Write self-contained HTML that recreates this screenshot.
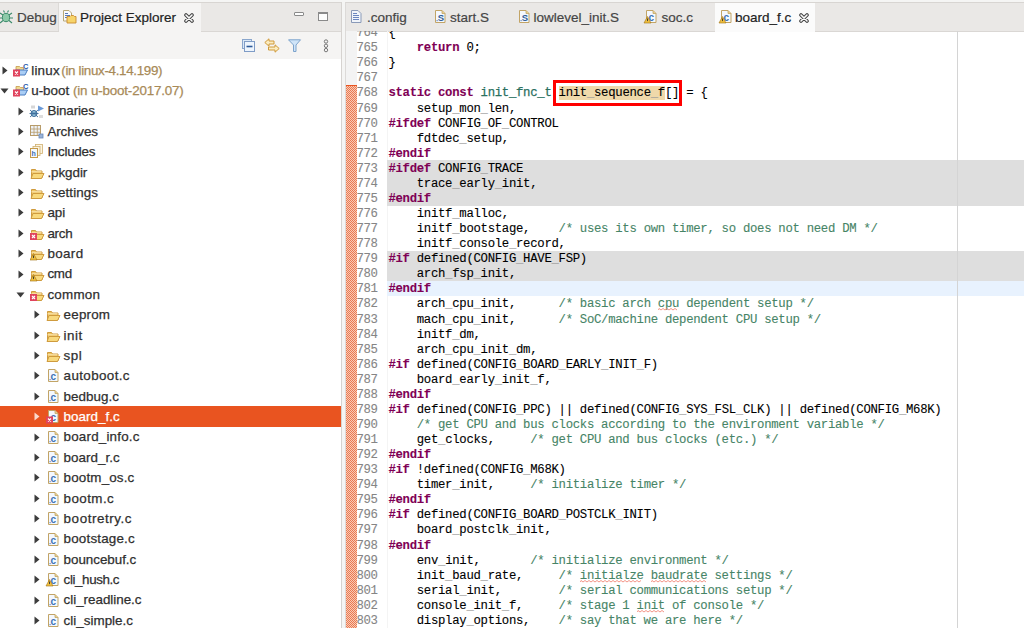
<!DOCTYPE html>
<html><head><meta charset="utf-8"><style>
html,body{margin:0;padding:0}
body{width:1024px;height:628px;overflow:hidden;position:relative;background:#f5f5f4;font-family:"Liberation Sans", sans-serif}
.abs{position:absolute}
.t{position:absolute;font-size:13.4px;line-height:16px;white-space:pre;-webkit-text-stroke:0.25px currentColor}
.tab{position:absolute;font-size:13.5px;line-height:16px;white-space:pre;color:#222;-webkit-text-stroke:0.2px currentColor}
.ln{position:absolute;left:0;width:31.7px;text-align:right;font-family:"Liberation Mono", monospace;font-size:12.3px;letter-spacing:-0.29px;line-height:15px;color:#858585;white-space:pre;-webkit-text-stroke:0.1px currentColor}
.cl{position:absolute;left:42.40px;font-family:"Liberation Mono", monospace;font-size:12.3px;letter-spacing:-0.29px;line-height:15px;color:#000;white-space:pre;-webkit-text-stroke:0.1px currentColor}
.k{color:#7f0055;font-weight:bold}
.t2{color:#005032}
.cl .t{position:static;font-size:inherit;line-height:inherit;color:#2a7060}
.c{color:#468466}
.u{color:#999}
.o{background:#efd9aa}
</style></head><body>
<!-- left panel -->
<div class="abs" style="left:0;top:2px;width:341px;height:626px;border-top:1px solid #d8d5d2;border-right:1px solid #d6d3d0;background:#fff;overflow:hidden">
  <div class="abs" style="left:0;top:0;width:341px;height:28px;background:#eae8e6;border-bottom:1px solid #dad7d4"></div>
  <div class="abs" style="left:58px;top:0;width:1px;height:28px;background:#dcdad7"></div>
  <div class="abs" style="left:59px;top:0;width:142px;height:30px;background:#f5f4f3"></div>
  <div class="abs" style="left:0;top:29px;width:341px;height:27px;background:#f5f4f3"></div>
</div>
<!-- left panel tab contents -->
<svg class="abs" style="left:-2px;top:9px" width="16" height="16" viewBox="0 0 16 16">
  <ellipse cx="8" cy="8.5" rx="3.6" ry="4.2" fill="#8ccaa8" stroke="#3a8a6a" stroke-width="1"/>
  <path d="M2 4 L5 6 M14 4 L11 6 M1 9 h3.5 M15 9 h-3.5 M2 14 L5 11.5 M14 14 L11 11.5 M6.5 3.5 L5.5 1.5 M9.5 3.5 L10.5 1.5" stroke="#3a8a6a" stroke-width="1.1"/>
</svg>
<div class="tab" style="left:17px;top:9.6px;color:#454545">Debug</div>
<svg class="abs" style="left:63px;top:10px" width="14" height="14" viewBox="0 0 14 14">
  <path d="M0.5 0.5 h5.5 l2.5 2.5 v8 h-8 z" fill="#fafbfd" stroke="#b8a878" stroke-width="1"/>
  <path d="M2 3.5 h3 M2 5.5 h5 M2 7.5 h5" stroke="#5a7ab8" stroke-width="1"/>
  <path d="M4 6.5 h3 l1 -1 h2.5 l1 1 h1.5 v6.5 h-9 z" fill="#f7d46a" stroke="#c88a30" stroke-width="0.9"/>
</svg>
<div class="tab" style="left:80px;top:9.6px">Project Explorer</div>
<svg class="abs" style="left:184px;top:12.5px" width="10" height="10" viewBox="0 0 10 10">
  <path d="M2 2 L8 8 M8 2 L2 8" stroke="#454545" stroke-width="3.6" stroke-linecap="round"/>
  <path d="M2 2 L8 8 M8 2 L2 8" stroke="#fbfbfb" stroke-width="1.6" stroke-linecap="round"/>
</svg>
<div class="abs" style="left:294px;top:12px;width:8px;height:2px;border:1px solid #8a8a8a;background:#fdfdfd;border-radius:1px"></div>
<div class="abs" style="left:318px;top:12px;width:8px;height:6px;border:1px solid #8a8a8a;border-top-width:2px;background:#fdfdfd"></div>
<!-- left toolbar -->
<svg class="abs" style="left:242px;top:39px" width="13" height="13" viewBox="0 0 13 13">
  <rect x="0.5" y="0.5" width="9" height="9" fill="#dbe8f6" stroke="#8aa6cc" stroke-width="1"/>
  <rect x="2.5" y="2.5" width="10" height="10" fill="#eef5fd" stroke="#7f9cc6" stroke-width="1"/>
  <path d="M4.5 7.5 h6" stroke="#2e5a9a" stroke-width="1.6"/>
</svg>
<svg class="abs" style="left:264px;top:38px" width="16" height="15" viewBox="0 0 16 15">
  <path d="M0.8 4.5 L5 0.8 L5 3 L10 3 L10 6 L5 6 L5 8.2 Z" fill="#fbecc0" stroke="#d09a3a" stroke-width="1"/>
  <path d="M15.2 10.5 L11 6.8 L11 9 L4.5 9 L4.5 12 L11 12 L11 14.2 Z" fill="#fbecc0" stroke="#d09a3a" stroke-width="1"/>
</svg>
<svg class="abs" style="left:288px;top:39px" width="14" height="14" viewBox="0 0 14 14">
  <path d="M0.5 0.8 L12.5 0.8 L8 6 L8 12.5 L5.5 12.5 L5.5 6 Z" fill="#cfe4f8" stroke="#7da3cc" stroke-width="1"/>
</svg>
<svg class="abs" style="left:323px;top:39px" width="6" height="14" viewBox="0 0 6 14">
  <circle cx="3" cy="2.5" r="1.7" fill="none" stroke="#777" stroke-width="1"/>
  <circle cx="3" cy="6.8" r="1.7" fill="none" stroke="#777" stroke-width="1"/>
  <circle cx="3" cy="11.1" r="1.7" fill="none" stroke="#777" stroke-width="1"/>
</svg>
<!-- tree -->
<svg style="position:absolute;left:2.0px;top:66px" width="6" height="9" viewBox="0 0 6 9" ><path d="M0.5 0.5 L5.5 4.5 L0.5 8.5 Z" fill="#3c3c3c"/></svg>
<svg style="position:absolute;left:12.5px;top:63px" width="16" height="14" viewBox="0 0 16 14" ><path d="M3 3.5 h3.5 l1 1 h3 v3 h-7.5 z" fill="#f0d890" stroke="#c49a4a" stroke-width="0.8"/><path d="M2.5 7 h12 l-2.5 5 h-9.5 z" fill="#a9cdf5" stroke="#4a7cc0" stroke-width="1"/><text x="10" y="6" font-family="Liberation Sans" font-weight="bold" font-size="7.5" fill="#2a5ca8">C</text><g transform="translate(0,6.5)"><rect x="0" y="0" width="7" height="7" fill="#e0445e"/><path d="M2 2 L5 5 M5 2 L2 5" stroke="#fff" stroke-width="1.1"/></g></svg>
<div class="t" style="left:31.2px;top:62.60px;color:#2f2f2f;letter-spacing:0.225px">linux</div><div class="t" style="left:61.3px;top:62.60px;color:#a88a58;letter-spacing:-0.33px">(in linux-4.14.199)</div>
<svg style="position:absolute;left:0.0px;top:88px" width="9" height="6" viewBox="0 0 9 6" ><path d="M0.5 0.5 L8.5 0.5 L4.5 5.5 Z" fill="#3c3c3c"/></svg>
<svg style="position:absolute;left:12.5px;top:83px" width="16" height="14" viewBox="0 0 16 14" ><path d="M3 3.5 h3.5 l1 1 h3 v3 h-7.5 z" fill="#f0d890" stroke="#c49a4a" stroke-width="0.8"/><path d="M2.5 7 h12 l-2.5 5 h-9.5 z" fill="#a9cdf5" stroke="#4a7cc0" stroke-width="1"/><text x="10" y="6" font-family="Liberation Sans" font-weight="bold" font-size="7.5" fill="#2a5ca8">C</text><g transform="translate(0,6.5)"><rect x="0" y="0" width="7" height="7" fill="#e0445e"/><path d="M2 2 L5 5 M5 2 L2 5" stroke="#fff" stroke-width="1.1"/></g></svg>
<div class="t" style="left:31.2px;top:82.98px;color:#2f2f2f;letter-spacing:0.000px">u-boot</div><div class="t" style="left:73.0px;top:82.98px;color:#a88a58;letter-spacing:-0.17px">(in u-boot-2017.07)</div>
<svg style="position:absolute;left:18.2px;top:107px" width="6" height="9" viewBox="0 0 6 9" ><path d="M0.5 0.5 L5.5 4.5 L0.5 8.5 Z" fill="#3c3c3c"/></svg>
<svg style="position:absolute;left:29.2px;top:105px" width="16" height="14" viewBox="0 0 16 14" ><path d="M9 0.5 L15 3.5 L9 6.5 Z" fill="#6a9ad8"/><circle cx="5" cy="8.5" r="3" fill="#9ac8e0" stroke="#3a6a98" stroke-width="1"/><path d="M1 5 L9 12 M9 5 L1 12 M0.5 8.5 h9" stroke="#3a6a98" stroke-width="0.9"/><path d="M3 0.5 v3 M5 0.5 v3" stroke="#999" stroke-width="0.8"/><path d="M11 10 v3 M13 10 v3" stroke="#aaa" stroke-width="0.8"/></svg>
<div class="t" style="left:47.4px;top:103.36px;color:#2f2f2f;letter-spacing:-0.129px">Binaries</div>
<svg style="position:absolute;left:18.2px;top:127px" width="6" height="9" viewBox="0 0 6 9" ><path d="M0.5 0.5 L5.5 4.5 L0.5 8.5 Z" fill="#3c3c3c"/></svg>
<svg style="position:absolute;left:29.2px;top:124px" width="15" height="15" viewBox="0 0 15 15" ><rect x="1.5" y="1.5" width="10" height="10" fill="#eef2f8" stroke="#b89c6a" stroke-width="1"/><path d="M5 1.5 v10 M8.3 1.5 v10 M1.5 5 h10 M1.5 8.3 h10" stroke="#b89c6a" stroke-width="0.8"/><rect x="10" y="10" width="4" height="4" fill="#9ab4d8" stroke="#6a88b8" stroke-width="0.8"/></svg>
<div class="t" style="left:47.4px;top:123.74px;color:#2f2f2f;letter-spacing:-0.114px">Archives</div>
<svg style="position:absolute;left:18.2px;top:147px" width="6" height="9" viewBox="0 0 6 9" ><path d="M0.5 0.5 L5.5 4.5 L0.5 8.5 Z" fill="#3c3c3c"/></svg>
<svg style="position:absolute;left:29.2px;top:144px" width="15" height="15" viewBox="0 0 15 15" ><rect x="6.5" y="0.5" width="7" height="9" fill="#fbf4e0" stroke="#d0b070" stroke-width="0.8"/><rect x="4" y="2.5" width="7" height="9" fill="#fbf4e0" stroke="#d0b070" stroke-width="0.8"/><rect x="1.5" y="4.5" width="7" height="9" fill="#f4f8fe" stroke="#c49a4a" stroke-width="1"/><text x="2.6" y="12.3" font-family="Liberation Sans" font-weight="bold" font-size="7" fill="#3a6fb4">h</text></svg>
<div class="t" style="left:47.4px;top:144.12px;color:#2f2f2f;letter-spacing:-0.272px">Includes</div>
<svg style="position:absolute;left:18.2px;top:168px" width="6" height="9" viewBox="0 0 6 9" ><path d="M0.5 0.5 L5.5 4.5 L0.5 8.5 Z" fill="#3c3c3c"/></svg>
<svg style="position:absolute;left:29.7px;top:167px" width="15" height="13" viewBox="0 0 15 13" ><path d="M1.5 2.5 h4 l1 1.5 h5.5 v7 h-10.5 z" fill="#eec462" stroke="#cf9b3e" stroke-width="1"/><path d="M1.5 4.8 h10" stroke="#fbe9b8" stroke-width="1"/><path d="M3 6.5 h11 l-2.5 5 h-10.5 z" fill="#f8d97e" stroke="#cf9b3e" stroke-width="1"/></svg>
<div class="t" style="left:47.4px;top:164.50px;color:#2f2f2f;letter-spacing:-0.050px">.pkgdir</div>
<svg style="position:absolute;left:18.2px;top:188px" width="6" height="9" viewBox="0 0 6 9" ><path d="M0.5 0.5 L5.5 4.5 L0.5 8.5 Z" fill="#3c3c3c"/></svg>
<svg style="position:absolute;left:29.7px;top:187px" width="15" height="13" viewBox="0 0 15 13" ><path d="M1.5 2.5 h4 l1 1.5 h5.5 v7 h-10.5 z" fill="#eec462" stroke="#cf9b3e" stroke-width="1"/><path d="M1.5 4.8 h10" stroke="#fbe9b8" stroke-width="1"/><path d="M3 6.5 h11 l-2.5 5 h-10.5 z" fill="#f8d97e" stroke="#cf9b3e" stroke-width="1"/></svg>
<div class="t" style="left:47.4px;top:184.88px;color:#2f2f2f;letter-spacing:0.100px">.settings</div>
<svg style="position:absolute;left:18.2px;top:208px" width="6" height="9" viewBox="0 0 6 9" ><path d="M0.5 0.5 L5.5 4.5 L0.5 8.5 Z" fill="#3c3c3c"/></svg>
<svg style="position:absolute;left:29.7px;top:207px" width="15" height="13" viewBox="0 0 15 13" ><path d="M1.5 2.5 h4 l1 1.5 h5.5 v7 h-10.5 z" fill="#eec462" stroke="#cf9b3e" stroke-width="1"/><path d="M1.5 4.8 h10" stroke="#fbe9b8" stroke-width="1"/><path d="M3 6.5 h11 l-2.5 5 h-10.5 z" fill="#f8d97e" stroke="#cf9b3e" stroke-width="1"/></svg>
<div class="t" style="left:47.4px;top:205.26px;color:#2f2f2f;letter-spacing:0.000px">api</div>
<svg style="position:absolute;left:18.2px;top:229px" width="6" height="9" viewBox="0 0 6 9" ><path d="M0.5 0.5 L5.5 4.5 L0.5 8.5 Z" fill="#3c3c3c"/></svg>
<svg style="position:absolute;left:29.7px;top:228px" width="15" height="13" viewBox="0 0 15 13" ><path d="M1.5 2.5 h4 l1 1.5 h5.5 v7 h-10.5 z" fill="#eec462" stroke="#cf9b3e" stroke-width="1"/><path d="M1.5 4.8 h10" stroke="#fbe9b8" stroke-width="1"/><path d="M3 6.5 h11 l-2.5 5 h-10.5 z" fill="#f8d97e" stroke="#cf9b3e" stroke-width="1"/><g transform="translate(0,5)"><rect x="0" y="0" width="7" height="7" fill="#e0445e"/><path d="M2 2 L5 5 M5 2 L2 5" stroke="#fff" stroke-width="1.1"/></g></svg>
<div class="t" style="left:47.4px;top:225.64px;color:#2f2f2f;letter-spacing:-0.267px">arch</div>
<svg style="position:absolute;left:18.2px;top:249px" width="6" height="9" viewBox="0 0 6 9" ><path d="M0.5 0.5 L5.5 4.5 L0.5 8.5 Z" fill="#3c3c3c"/></svg>
<svg style="position:absolute;left:29.7px;top:248px" width="15" height="13" viewBox="0 0 15 13" ><path d="M1.5 2.5 h4 l1 1.5 h5.5 v7 h-10.5 z" fill="#eec462" stroke="#cf9b3e" stroke-width="1"/><path d="M1.5 4.8 h10" stroke="#fbe9b8" stroke-width="1"/><path d="M3 6.5 h11 l-2.5 5 h-10.5 z" fill="#f8d97e" stroke="#cf9b3e" stroke-width="1"/><g transform="translate(0,5.5)"><path d="M3.5 0 L7 6.5 L0 6.5 Z" fill="#f0c040" stroke="#a07010" stroke-width="0.6"/><rect x="3.1" y="2" width="0.9" height="2.6" fill="#333"/></g></svg>
<div class="t" style="left:47.4px;top:246.02px;color:#2f2f2f;letter-spacing:0.375px">board</div>
<svg style="position:absolute;left:18.2px;top:270px" width="6" height="9" viewBox="0 0 6 9" ><path d="M0.5 0.5 L5.5 4.5 L0.5 8.5 Z" fill="#3c3c3c"/></svg>
<svg style="position:absolute;left:29.7px;top:269px" width="15" height="13" viewBox="0 0 15 13" ><path d="M1.5 2.5 h4 l1 1.5 h5.5 v7 h-10.5 z" fill="#eec462" stroke="#cf9b3e" stroke-width="1"/><path d="M1.5 4.8 h10" stroke="#fbe9b8" stroke-width="1"/><path d="M3 6.5 h11 l-2.5 5 h-10.5 z" fill="#f8d97e" stroke="#cf9b3e" stroke-width="1"/><g transform="translate(0,5.5)"><path d="M3.5 0 L7 6.5 L0 6.5 Z" fill="#f0c040" stroke="#a07010" stroke-width="0.6"/><rect x="3.1" y="2" width="0.9" height="2.6" fill="#333"/></g></svg>
<div class="t" style="left:47.4px;top:266.40px;color:#2f2f2f;letter-spacing:-0.251px">cmd</div>
<svg style="position:absolute;left:16.2px;top:292px" width="9" height="6" viewBox="0 0 9 6" ><path d="M0.5 0.5 L8.5 0.5 L4.5 5.5 Z" fill="#3c3c3c"/></svg>
<svg style="position:absolute;left:29.7px;top:289px" width="15" height="13" viewBox="0 0 15 13" ><path d="M1.5 2.5 h4 l1 1.5 h5.5 v7 h-10.5 z" fill="#eec462" stroke="#cf9b3e" stroke-width="1"/><path d="M1.5 4.8 h10" stroke="#fbe9b8" stroke-width="1"/><path d="M3 6.5 h11 l-2.5 5 h-10.5 z" fill="#f8d97e" stroke="#cf9b3e" stroke-width="1"/><g transform="translate(0,5)"><rect x="0" y="0" width="7" height="7" fill="#e0445e"/><path d="M2 2 L5 5 M5 2 L2 5" stroke="#fff" stroke-width="1.1"/></g></svg>
<div class="t" style="left:47.4px;top:286.78px;color:#2f2f2f;letter-spacing:0.240px">common</div>
<svg style="position:absolute;left:34.4px;top:310px" width="6" height="9" viewBox="0 0 6 9" ><path d="M0.5 0.5 L5.5 4.5 L0.5 8.5 Z" fill="#3c3c3c"/></svg>
<svg style="position:absolute;left:45.9px;top:309px" width="15" height="13" viewBox="0 0 15 13" ><path d="M1.5 2.5 h4 l1 1.5 h5.5 v7 h-10.5 z" fill="#eec462" stroke="#cf9b3e" stroke-width="1"/><path d="M1.5 4.8 h10" stroke="#fbe9b8" stroke-width="1"/><path d="M3 6.5 h11 l-2.5 5 h-10.5 z" fill="#f8d97e" stroke="#cf9b3e" stroke-width="1"/></svg>
<div class="t" style="left:63.6px;top:307.16px;color:#2f2f2f;letter-spacing:0.200px">eeprom</div>
<svg style="position:absolute;left:34.4px;top:331px" width="6" height="9" viewBox="0 0 6 9" ><path d="M0.5 0.5 L5.5 4.5 L0.5 8.5 Z" fill="#3c3c3c"/></svg>
<svg style="position:absolute;left:45.9px;top:330px" width="15" height="13" viewBox="0 0 15 13" ><path d="M1.5 2.5 h4 l1 1.5 h5.5 v7 h-10.5 z" fill="#eec462" stroke="#cf9b3e" stroke-width="1"/><path d="M1.5 4.8 h10" stroke="#fbe9b8" stroke-width="1"/><path d="M3 6.5 h11 l-2.5 5 h-10.5 z" fill="#f8d97e" stroke="#cf9b3e" stroke-width="1"/></svg>
<div class="t" style="left:63.6px;top:327.54px;color:#2f2f2f;letter-spacing:0.467px">init</div>
<svg style="position:absolute;left:34.4px;top:351px" width="6" height="9" viewBox="0 0 6 9" ><path d="M0.5 0.5 L5.5 4.5 L0.5 8.5 Z" fill="#3c3c3c"/></svg>
<svg style="position:absolute;left:45.9px;top:350px" width="15" height="13" viewBox="0 0 15 13" ><path d="M1.5 2.5 h4 l1 1.5 h5.5 v7 h-10.5 z" fill="#eec462" stroke="#cf9b3e" stroke-width="1"/><path d="M1.5 4.8 h10" stroke="#fbe9b8" stroke-width="1"/><path d="M3 6.5 h11 l-2.5 5 h-10.5 z" fill="#f8d97e" stroke="#cf9b3e" stroke-width="1"/></svg>
<div class="t" style="left:63.6px;top:347.92px;color:#2f2f2f;letter-spacing:0.450px">spl</div>
<svg style="position:absolute;left:34.4px;top:371px" width="6" height="9" viewBox="0 0 6 9" ><path d="M0.5 0.5 L5.5 4.5 L0.5 8.5 Z" fill="#3c3c3c"/></svg>
<svg style="position:absolute;left:47.9px;top:368.5px" width="11" height="14" viewBox="0 0 11 14" overflow="visible"><path d="M0.5 0.5 h6.5 l3 3 v9 h-9.5 z" fill="#f4f8fe" stroke="#c2a466" stroke-width="1"/><path d="M7 0.5 v3 h3" fill="#e8cf8c" stroke="#c2a466" stroke-width="0.8"/><text x="2.6" y="11" font-family="Liberation Sans" font-weight="bold" font-size="10" fill="#3f73b6">c</text><rect x="1.5" y="10" width="1.2" height="1.2" fill="#6a8fc0"/></svg>
<div class="t" style="left:63.6px;top:368.30px;color:#2f2f2f;letter-spacing:0.378px">autoboot.c</div>
<svg style="position:absolute;left:34.4px;top:392px" width="6" height="9" viewBox="0 0 6 9" ><path d="M0.5 0.5 L5.5 4.5 L0.5 8.5 Z" fill="#3c3c3c"/></svg>
<svg style="position:absolute;left:47.9px;top:389.5px" width="11" height="14" viewBox="0 0 11 14" overflow="visible"><path d="M0.5 0.5 h6.5 l3 3 v9 h-9.5 z" fill="#f4f8fe" stroke="#c2a466" stroke-width="1"/><path d="M7 0.5 v3 h3" fill="#e8cf8c" stroke="#c2a466" stroke-width="0.8"/><text x="2.6" y="11" font-family="Liberation Sans" font-weight="bold" font-size="10" fill="#3f73b6">c</text><rect x="1.5" y="10" width="1.2" height="1.2" fill="#6a8fc0"/></svg>
<div class="t" style="left:63.6px;top:388.68px;color:#2f2f2f;letter-spacing:0.029px">bedbug.c</div>
<div style="position:absolute;left:0;top:405.86px;width:341px;height:21px;background:#e95420"></div>
<svg style="position:absolute;left:34.4px;top:412px" width="6" height="9" viewBox="0 0 6 9" ><path d="M0.5 0.5 L5.5 4.5 L0.5 8.5 Z" fill="#fbd9cc"/></svg>
<svg style="position:absolute;left:47.9px;top:409.5px" width="11" height="14" viewBox="0 0 11 14" overflow="visible"><path d="M0.5 0.5 h6.5 l3 3 v9 h-9.5 z" fill="#f4f8fe" stroke="#c2a466" stroke-width="1"/><path d="M7 0.5 v3 h3" fill="#e8cf8c" stroke="#c2a466" stroke-width="0.8"/><text x="2.6" y="11" font-family="Liberation Sans" font-weight="bold" font-size="10" fill="#3f73b6">c</text><rect x="1.5" y="10" width="1.2" height="1.2" fill="#6a8fc0"/><g transform="translate(-2,6.5)"><rect x="0" y="0" width="7" height="7" fill="#e0445e"/><path d="M2 2 L5 5 M5 2 L2 5" stroke="#fff" stroke-width="1.1"/></g></svg>
<div class="t" style="left:63.6px;top:409.06px;color:#ffffff;letter-spacing:0.025px">board_f.c</div>
<svg style="position:absolute;left:34.4px;top:433px" width="6" height="9" viewBox="0 0 6 9" ><path d="M0.5 0.5 L5.5 4.5 L0.5 8.5 Z" fill="#3c3c3c"/></svg>
<svg style="position:absolute;left:47.9px;top:430.5px" width="11" height="14" viewBox="0 0 11 14" overflow="visible"><path d="M0.5 0.5 h6.5 l3 3 v9 h-9.5 z" fill="#f4f8fe" stroke="#c2a466" stroke-width="1"/><path d="M7 0.5 v3 h3" fill="#e8cf8c" stroke="#c2a466" stroke-width="0.8"/><text x="2.6" y="11" font-family="Liberation Sans" font-weight="bold" font-size="10" fill="#3f73b6">c</text><rect x="1.5" y="10" width="1.2" height="1.2" fill="#6a8fc0"/></svg>
<div class="t" style="left:63.6px;top:429.44px;color:#2f2f2f;letter-spacing:0.191px">board_info.c</div>
<svg style="position:absolute;left:34.4px;top:453px" width="6" height="9" viewBox="0 0 6 9" ><path d="M0.5 0.5 L5.5 4.5 L0.5 8.5 Z" fill="#3c3c3c"/></svg>
<svg style="position:absolute;left:47.9px;top:450.5px" width="11" height="14" viewBox="0 0 11 14" overflow="visible"><path d="M0.5 0.5 h6.5 l3 3 v9 h-9.5 z" fill="#f4f8fe" stroke="#c2a466" stroke-width="1"/><path d="M7 0.5 v3 h3" fill="#e8cf8c" stroke="#c2a466" stroke-width="0.8"/><text x="2.6" y="11" font-family="Liberation Sans" font-weight="bold" font-size="10" fill="#3f73b6">c</text><rect x="1.5" y="10" width="1.2" height="1.2" fill="#6a8fc0"/></svg>
<div class="t" style="left:63.6px;top:449.82px;color:#2f2f2f;letter-spacing:0.025px">board_r.c</div>
<svg style="position:absolute;left:34.4px;top:473px" width="6" height="9" viewBox="0 0 6 9" ><path d="M0.5 0.5 L5.5 4.5 L0.5 8.5 Z" fill="#3c3c3c"/></svg>
<svg style="position:absolute;left:47.9px;top:470.5px" width="11" height="14" viewBox="0 0 11 14" overflow="visible"><path d="M0.5 0.5 h6.5 l3 3 v9 h-9.5 z" fill="#f4f8fe" stroke="#c2a466" stroke-width="1"/><path d="M7 0.5 v3 h3" fill="#e8cf8c" stroke="#c2a466" stroke-width="0.8"/><text x="2.6" y="11" font-family="Liberation Sans" font-weight="bold" font-size="10" fill="#3f73b6">c</text><rect x="1.5" y="10" width="1.2" height="1.2" fill="#6a8fc0"/></svg>
<div class="t" style="left:63.6px;top:470.20px;color:#2f2f2f;letter-spacing:0.167px">bootm_os.c</div>
<svg style="position:absolute;left:34.4px;top:494px" width="6" height="9" viewBox="0 0 6 9" ><path d="M0.5 0.5 L5.5 4.5 L0.5 8.5 Z" fill="#3c3c3c"/></svg>
<svg style="position:absolute;left:47.9px;top:491.5px" width="11" height="14" viewBox="0 0 11 14" overflow="visible"><path d="M0.5 0.5 h6.5 l3 3 v9 h-9.5 z" fill="#f4f8fe" stroke="#c2a466" stroke-width="1"/><path d="M7 0.5 v3 h3" fill="#e8cf8c" stroke="#c2a466" stroke-width="0.8"/><text x="2.6" y="11" font-family="Liberation Sans" font-weight="bold" font-size="10" fill="#3f73b6">c</text><rect x="1.5" y="10" width="1.2" height="1.2" fill="#6a8fc0"/></svg>
<div class="t" style="left:63.6px;top:490.58px;color:#2f2f2f;letter-spacing:0.416px">bootm.c</div>
<svg style="position:absolute;left:34.4px;top:514px" width="6" height="9" viewBox="0 0 6 9" ><path d="M0.5 0.5 L5.5 4.5 L0.5 8.5 Z" fill="#3c3c3c"/></svg>
<svg style="position:absolute;left:47.9px;top:511.5px" width="11" height="14" viewBox="0 0 11 14" overflow="visible"><path d="M0.5 0.5 h6.5 l3 3 v9 h-9.5 z" fill="#f4f8fe" stroke="#c2a466" stroke-width="1"/><path d="M7 0.5 v3 h3" fill="#e8cf8c" stroke="#c2a466" stroke-width="0.8"/><text x="2.6" y="11" font-family="Liberation Sans" font-weight="bold" font-size="10" fill="#3f73b6">c</text><rect x="1.5" y="10" width="1.2" height="1.2" fill="#6a8fc0"/></svg>
<div class="t" style="left:63.6px;top:510.96px;color:#2f2f2f;letter-spacing:0.570px">bootretry.c</div>
<svg style="position:absolute;left:34.4px;top:535px" width="6" height="9" viewBox="0 0 6 9" ><path d="M0.5 0.5 L5.5 4.5 L0.5 8.5 Z" fill="#3c3c3c"/></svg>
<svg style="position:absolute;left:47.9px;top:532.5px" width="11" height="14" viewBox="0 0 11 14" overflow="visible"><path d="M0.5 0.5 h6.5 l3 3 v9 h-9.5 z" fill="#f4f8fe" stroke="#c2a466" stroke-width="1"/><path d="M7 0.5 v3 h3" fill="#e8cf8c" stroke="#c2a466" stroke-width="0.8"/><text x="2.6" y="11" font-family="Liberation Sans" font-weight="bold" font-size="10" fill="#3f73b6">c</text><rect x="1.5" y="10" width="1.2" height="1.2" fill="#6a8fc0"/></svg>
<div class="t" style="left:63.6px;top:531.34px;color:#2f2f2f;letter-spacing:0.190px">bootstage.c</div>
<svg style="position:absolute;left:34.4px;top:555px" width="6" height="9" viewBox="0 0 6 9" ><path d="M0.5 0.5 L5.5 4.5 L0.5 8.5 Z" fill="#3c3c3c"/></svg>
<svg style="position:absolute;left:47.9px;top:552.5px" width="11" height="14" viewBox="0 0 11 14" overflow="visible"><path d="M0.5 0.5 h6.5 l3 3 v9 h-9.5 z" fill="#f4f8fe" stroke="#c2a466" stroke-width="1"/><path d="M7 0.5 v3 h3" fill="#e8cf8c" stroke="#c2a466" stroke-width="0.8"/><text x="2.6" y="11" font-family="Liberation Sans" font-weight="bold" font-size="10" fill="#3f73b6">c</text><rect x="1.5" y="10" width="1.2" height="1.2" fill="#6a8fc0"/></svg>
<div class="t" style="left:63.6px;top:551.72px;color:#2f2f2f;letter-spacing:-0.030px">bouncebuf.c</div>
<svg style="position:absolute;left:34.4px;top:575px" width="6" height="9" viewBox="0 0 6 9" ><path d="M0.5 0.5 L5.5 4.5 L0.5 8.5 Z" fill="#3c3c3c"/></svg>
<svg style="position:absolute;left:47.9px;top:572.5px" width="11" height="14" viewBox="0 0 11 14" overflow="visible"><path d="M0.5 0.5 h6.5 l3 3 v9 h-9.5 z" fill="#f4f8fe" stroke="#c2a466" stroke-width="1"/><path d="M7 0.5 v3 h3" fill="#e8cf8c" stroke="#c2a466" stroke-width="0.8"/><text x="2.6" y="11" font-family="Liberation Sans" font-weight="bold" font-size="10" fill="#3f73b6">c</text><rect x="1.5" y="10" width="1.2" height="1.2" fill="#6a8fc0"/><g transform="translate(-2,6.5)"><path d="M3.5 0 L7 6.5 L0 6.5 Z" fill="#f0c040" stroke="#a07010" stroke-width="0.6"/><rect x="3.1" y="2" width="0.9" height="2.6" fill="#333"/></g></svg>
<div class="t" style="left:63.6px;top:572.10px;color:#2f2f2f;letter-spacing:-0.400px">cli_hush.c</div>
<svg style="position:absolute;left:34.4px;top:596px" width="6" height="9" viewBox="0 0 6 9" ><path d="M0.5 0.5 L5.5 4.5 L0.5 8.5 Z" fill="#3c3c3c"/></svg>
<svg style="position:absolute;left:47.9px;top:593.5px" width="11" height="14" viewBox="0 0 11 14" overflow="visible"><path d="M0.5 0.5 h6.5 l3 3 v9 h-9.5 z" fill="#f4f8fe" stroke="#c2a466" stroke-width="1"/><path d="M7 0.5 v3 h3" fill="#e8cf8c" stroke="#c2a466" stroke-width="0.8"/><text x="2.6" y="11" font-family="Liberation Sans" font-weight="bold" font-size="10" fill="#3f73b6">c</text><rect x="1.5" y="10" width="1.2" height="1.2" fill="#6a8fc0"/></svg>
<div class="t" style="left:63.6px;top:592.48px;color:#2f2f2f;letter-spacing:-0.023px">cli_readline.c</div>
<svg style="position:absolute;left:34.4px;top:616px" width="6" height="9" viewBox="0 0 6 9" ><path d="M0.5 0.5 L5.5 4.5 L0.5 8.5 Z" fill="#3c3c3c"/></svg>
<svg style="position:absolute;left:47.9px;top:613.5px" width="11" height="14" viewBox="0 0 11 14" overflow="visible"><path d="M0.5 0.5 h6.5 l3 3 v9 h-9.5 z" fill="#f4f8fe" stroke="#c2a466" stroke-width="1"/><path d="M7 0.5 v3 h3" fill="#e8cf8c" stroke="#c2a466" stroke-width="0.8"/><text x="2.6" y="11" font-family="Liberation Sans" font-weight="bold" font-size="10" fill="#3f73b6">c</text><rect x="1.5" y="10" width="1.2" height="1.2" fill="#6a8fc0"/></svg>
<div class="t" style="left:63.6px;top:612.86px;color:#2f2f2f;letter-spacing:0.019px">cli_simple.c</div>
<!-- editor panel -->
<div class="abs" style="left:345px;top:2px;width:679px;height:626px;border-top:1px solid #d8d5d2;border-left:1px solid #dcdad8;background:#fff;overflow:hidden">
  <div class="abs" style="left:0;top:0;width:679px;height:28px;background:#eae8e6;border-bottom:1px solid #dad7d4"></div>
  <div class="abs" style="left:369px;top:0;width:100px;height:29px;background:#fbfbfb"></div>
</div>
<!-- editor tabs -->

<svg style="position:absolute;left:351px;top:10px" width="11" height="14" viewBox="0 0 11 14" ><path d="M0.5 0.5 h6.5 l3 3 v9 h-9.5 z" fill="#f0f4fa" stroke="#8a9ab8" stroke-width="1"/><path d="M2 3.5 h4 M2 5.5 h6 M2 7.5 h6 M2 9.5 h6" stroke="#6a86c0" stroke-width="1"/></svg>
<div class="tab" style="left:367px;top:9.6px;color:#454545">.config</div>
<svg style="position:absolute;left:435px;top:10px" width="11" height="14" viewBox="0 0 11 14" ><path d="M0.5 0.5 h6.5 l3 3 v9 h-9.5 z" fill="#f4f8fe" stroke="#c2a466" stroke-width="1"/><path d="M7 0.5 v3 h3" fill="#e8cf8c" stroke="#c2a466" stroke-width="0.8"/><text x="2.8" y="11" font-family="Liberation Sans" font-weight="bold" font-size="9.5" fill="#2f5c98">S</text><rect x="1.5" y="10" width="1.2" height="1.2" fill="#6a8fc0"/></svg>
<div class="tab" style="left:450px;top:9.6px;color:#454545">start.S</div>
<svg style="position:absolute;left:519px;top:10px" width="11" height="14" viewBox="0 0 11 14" ><path d="M0.5 0.5 h6.5 l3 3 v9 h-9.5 z" fill="#f4f8fe" stroke="#c2a466" stroke-width="1"/><path d="M7 0.5 v3 h3" fill="#e8cf8c" stroke="#c2a466" stroke-width="0.8"/><text x="2.8" y="11" font-family="Liberation Sans" font-weight="bold" font-size="9.5" fill="#2f5c98">S</text><rect x="1.5" y="10" width="1.2" height="1.2" fill="#6a8fc0"/></svg>
<div class="tab" style="left:533.5px;top:9.6px;color:#454545">lowlevel_init.S</div>
<svg style="position:absolute;left:646px;top:10px" width="11" height="14" viewBox="0 0 11 14" overflow="visible"><path d="M0.5 0.5 h6.5 l3 3 v9 h-9.5 z" fill="#f4f8fe" stroke="#c2a466" stroke-width="1"/><path d="M7 0.5 v3 h3" fill="#e8cf8c" stroke="#c2a466" stroke-width="0.8"/><text x="2.6" y="11" font-family="Liberation Sans" font-weight="bold" font-size="10" fill="#3f73b6">c</text><rect x="1.5" y="10" width="1.2" height="1.2" fill="#6a8fc0"/><g transform="translate(-2,6.5)"><path d="M3.5 0 L7 6.5 L0 6.5 Z" fill="#f0c040" stroke="#a07010" stroke-width="0.6"/><rect x="3.1" y="2" width="0.9" height="2.6" fill="#333"/></g></svg>
<div class="tab" style="left:661.5px;top:9.6px;color:#454545">soc.c</div>
<svg style="position:absolute;left:721px;top:10px" width="11" height="14" viewBox="0 0 11 14" overflow="visible"><path d="M0.5 0.5 h6.5 l3 3 v9 h-9.5 z" fill="#f4f8fe" stroke="#c2a466" stroke-width="1"/><path d="M7 0.5 v3 h3" fill="#e8cf8c" stroke="#c2a466" stroke-width="0.8"/><text x="2.6" y="11" font-family="Liberation Sans" font-weight="bold" font-size="10" fill="#3f73b6">c</text><rect x="1.5" y="10" width="1.2" height="1.2" fill="#6a8fc0"/><g transform="translate(-2,6.5)"><path d="M3.5 0 L7 6.5 L0 6.5 Z" fill="#f0c040" stroke="#a07010" stroke-width="0.6"/><rect x="3.1" y="2" width="0.9" height="2.6" fill="#333"/></g></svg>
<div class="tab" style="left:735px;top:9.6px">board_f.c</div>
<svg class="abs" style="left:798.5px;top:12.5px" width="10" height="10" viewBox="0 0 10 10">
  <path d="M2 2 L8 8 M8 2 L2 8" stroke="#454545" stroke-width="3.6" stroke-linecap="round"/>
  <path d="M2 2 L8 8 M8 2 L2 8" stroke="#fbfbfb" stroke-width="1.6" stroke-linecap="round"/>
</svg>

<div class="abs" style="left:346px;top:31px;width:678px;height:597px;overflow:hidden">
  <div class="abs" style="left:0;top:0;width:11px;height:597px;background:#f3f3f3"></div>
  <div class="abs" style="left:0;top:53.95px;width:11px;height:600px;background:repeating-conic-gradient(#ec7850 0% 25%, #f7cbb6 0% 50%) 0 0/2px 2px"></div>
  <div class="abs" style="left:0;top:53.95px;width:11px;height:1px;background:#e95420"></div>
  <div class="abs" style="left:40.5px;top:0;width:1px;height:597px;background:#f4f4f4"></div>
<div style="position:absolute;left:41px;top:129.30px;width:640px;height:15.12px;background:#dedede"></div>
<div style="position:absolute;left:41px;top:144.37px;width:640px;height:15.12px;background:#dedede"></div>
<div style="position:absolute;left:41px;top:159.44px;width:640px;height:15.12px;background:#dedede"></div>
<div style="position:absolute;left:41px;top:219.72px;width:640px;height:15.12px;background:#dedede"></div>
<div style="position:absolute;left:41px;top:234.79px;width:640px;height:15.12px;background:#dedede"></div>
<div style="position:absolute;left:41px;top:249.86px;width:640px;height:15.07px;background:#e8f2fe"></div>
<div class="ln" style="top:-4.83px">764</div>
<div class="cl" style="top:-4.83px">{</div>
<div class="ln" style="top:10.24px">765</div>
<div class="cl" style="top:10.24px">    <span class="k">return</span> 0;</div>
<div class="ln" style="top:25.31px">766</div>
<div class="cl" style="top:25.31px">}</div>
<div class="ln" style="top:40.38px">767</div>
<div class="ln" style="top:55.45px">768</div>
<div class="cl" style="top:55.45px"><span class="k">static</span> <span class="k">const</span> <span class="t">init_fnc_t</span> <span class="o">init<span class="u">_</span>sequence<span class="u">_</span>f</span>[] = {</div>
<div class="ln" style="top:70.52px">769</div>
<div class="cl" style="top:70.52px">    setup<span class="u">_</span>mon<span class="u">_</span>len,</div>
<div class="ln" style="top:85.59px">770</div>
<div class="cl" style="top:85.59px"><span class="k">#ifdef</span> CONFIG<span class="u">_</span>OF<span class="u">_</span>CONTROL</div>
<div class="ln" style="top:100.66px">771</div>
<div class="cl" style="top:100.66px">    fdtdec<span class="u">_</span>setup,</div>
<div class="ln" style="top:115.73px">772</div>
<div class="cl" style="top:115.73px"><span class="k">#endif</span></div>
<div class="ln" style="top:130.80px">773</div>
<div class="cl" style="top:130.80px"><span class="k">#ifdef</span> CONFIG<span class="u">_</span>TRACE</div>
<div class="ln" style="top:145.87px">774</div>
<div class="cl" style="top:145.87px">    trace<span class="u">_</span>early<span class="u">_</span>init,</div>
<div class="ln" style="top:160.94px">775</div>
<div class="cl" style="top:160.94px"><span class="k">#endif</span></div>
<div class="ln" style="top:176.01px">776</div>
<div class="cl" style="top:176.01px">    initf<span class="u">_</span>malloc,</div>
<div class="ln" style="top:191.08px">777</div>
<div class="cl" style="top:191.08px">    initf<span class="u">_</span>bootstage,    <span class="c">/* uses its own timer, so does not need DM */</span></div>
<div class="ln" style="top:206.15px">778</div>
<div class="cl" style="top:206.15px">    initf<span class="u">_</span>console<span class="u">_</span>record,</div>
<div class="ln" style="top:221.22px">779</div>
<div class="cl" style="top:221.22px"><span class="k">#if</span> defined(CONFIG<span class="u">_</span>HAVE<span class="u">_</span>FSP)</div>
<div class="ln" style="top:236.29px">780</div>
<div class="cl" style="top:236.29px">    arch<span class="u">_</span>fsp<span class="u">_</span>init,</div>
<div class="ln" style="top:251.36px">781</div>
<div class="cl" style="top:251.36px"><span class="k">#endif</span></div>
<div class="ln" style="top:266.43px">782</div>
<div class="cl" style="top:266.43px">    arch<span class="u">_</span>cpu<span class="u">_</span>init,      <span class="c">/* basic arch cpu dependent setup */</span></div>
<div class="ln" style="top:281.50px">783</div>
<div class="cl" style="top:281.50px">    mach<span class="u">_</span>cpu<span class="u">_</span>init,      <span class="c">/* SoC/machine dependent CPU setup */</span></div>
<div class="ln" style="top:296.57px">784</div>
<div class="cl" style="top:296.57px">    initf<span class="u">_</span>dm,</div>
<div class="ln" style="top:311.64px">785</div>
<div class="cl" style="top:311.64px">    arch<span class="u">_</span>cpu<span class="u">_</span>init<span class="u">_</span>dm,</div>
<div class="ln" style="top:326.71px">786</div>
<div class="cl" style="top:326.71px"><span class="k">#if</span> defined(CONFIG<span class="u">_</span>BOARD<span class="u">_</span>EARLY<span class="u">_</span>INIT<span class="u">_</span>F)</div>
<div class="ln" style="top:341.78px">787</div>
<div class="cl" style="top:341.78px">    board<span class="u">_</span>early<span class="u">_</span>init<span class="u">_</span>f,</div>
<div class="ln" style="top:356.85px">788</div>
<div class="cl" style="top:356.85px"><span class="k">#endif</span></div>
<div class="ln" style="top:371.92px">789</div>
<div class="cl" style="top:371.92px"><span class="k">#if</span> defined(CONFIG<span class="u">_</span>PPC) || defined(CONFIG<span class="u">_</span>SYS<span class="u">_</span>FSL<span class="u">_</span>CLK) || defined(CONFIG<span class="u">_</span>M68K)</div>
<div class="ln" style="top:386.99px">790</div>
<div class="cl" style="top:386.99px">    <span class="c">/* get CPU and bus clocks according to the environment variable */</span></div>
<div class="ln" style="top:402.06px">791</div>
<div class="cl" style="top:402.06px">    get<span class="u">_</span>clocks,     <span class="c">/* get CPU and bus clocks (etc.) */</span></div>
<div class="ln" style="top:417.13px">792</div>
<div class="cl" style="top:417.13px"><span class="k">#endif</span></div>
<div class="ln" style="top:432.20px">793</div>
<div class="cl" style="top:432.20px"><span class="k">#if</span> !defined(CONFIG<span class="u">_</span>M68K)</div>
<div class="ln" style="top:447.27px">794</div>
<div class="cl" style="top:447.27px">    timer<span class="u">_</span>init,     <span class="c">/* initialize timer */</span></div>
<div class="ln" style="top:462.34px">795</div>
<div class="cl" style="top:462.34px"><span class="k">#endif</span></div>
<div class="ln" style="top:477.41px">796</div>
<div class="cl" style="top:477.41px"><span class="k">#if</span> defined(CONFIG<span class="u">_</span>BOARD<span class="u">_</span>POSTCLK<span class="u">_</span>INIT)</div>
<div class="ln" style="top:492.48px">797</div>
<div class="cl" style="top:492.48px">    board<span class="u">_</span>postclk<span class="u">_</span>init,</div>
<div class="ln" style="top:507.55px">798</div>
<div class="cl" style="top:507.55px"><span class="k">#endif</span></div>
<div class="ln" style="top:522.62px">799</div>
<div class="cl" style="top:522.62px">    env<span class="u">_</span>init,       <span class="c">/* initialize environment */</span></div>
<div class="ln" style="top:537.69px">800</div>
<div class="cl" style="top:537.69px">    init<span class="u">_</span>baud<span class="u">_</span>rate,     <span class="c">/* initialze baudrate settings */</span></div>
<div class="ln" style="top:552.76px">801</div>
<div class="cl" style="top:552.76px">    serial<span class="u">_</span>init,        <span class="c">/* serial communications setup */</span></div>
<div class="ln" style="top:567.83px">802</div>
<div class="cl" style="top:567.83px">    console<span class="u">_</span>init<span class="u">_</span>f,     <span class="c">/* stage 1 init of console */</span></div>
<div class="ln" style="top:582.90px">803</div>
<div class="cl" style="top:582.90px">    display<span class="u">_</span>options,    <span class="c">/* say that we are here */</span></div>
<svg style="position:absolute;left:311.8px;top:277.2px" width="21.3" height="3"><path d="M0 2 L1 0.5 L3 2 L5 0.5 L7 2 L9 0.5 L11 2 L13 0.5 L15 2 L17 0.5 L19 2" stroke="#f28a7a" stroke-width="0.9" fill="none"/></svg>
<svg style="position:absolute;left:233.8px;top:548.5px" width="63.8" height="3"><path d="M0 2 L1 0.5 L3 2 L5 0.5 L7 2 L9 0.5 L11 2 L13 0.5 L15 2 L17 0.5 L19 2 L21 0.5 L23 2 L25 0.5 L27 2 L29 0.5 L31 2 L33 0.5 L35 2 L37 0.5 L39 2 L41 0.5 L43 2 L45 0.5 L47 2 L49 0.5 L51 2 L53 0.5 L55 2 L57 0.5 L59 2 L61 0.5" stroke="#f28a7a" stroke-width="0.9" fill="none"/></svg>
<svg style="position:absolute;left:304.7px;top:548.5px" width="56.7" height="3"><path d="M0 2 L1 0.5 L3 2 L5 0.5 L7 2 L9 0.5 L11 2 L13 0.5 L15 2 L17 0.5 L19 2 L21 0.5 L23 2 L25 0.5 L27 2 L29 0.5 L31 2 L33 0.5 L35 2 L37 0.5 L39 2 L41 0.5 L43 2 L45 0.5 L47 2 L49 0.5 L51 2 L53 0.5 L55 2" stroke="#f28a7a" stroke-width="0.9" fill="none"/></svg>
<svg style="position:absolute;left:290.5px;top:578.6px" width="28.4" height="3"><path d="M0 2 L1 0.5 L3 2 L5 0.5 L7 2 L9 0.5 L11 2 L13 0.5 L15 2 L17 0.5 L19 2 L21 0.5 L23 2 L25 0.5 L27 2" stroke="#f28a7a" stroke-width="0.9" fill="none"/></svg>
  <div class="abs" style="left:611px;top:0;width:1px;height:597px;background:#d4d4d4"></div>
  <div class="abs" style="left:207px;top:49px;width:123px;height:20px;border:3px solid #ff0000"></div>
</div>
</body></html>
